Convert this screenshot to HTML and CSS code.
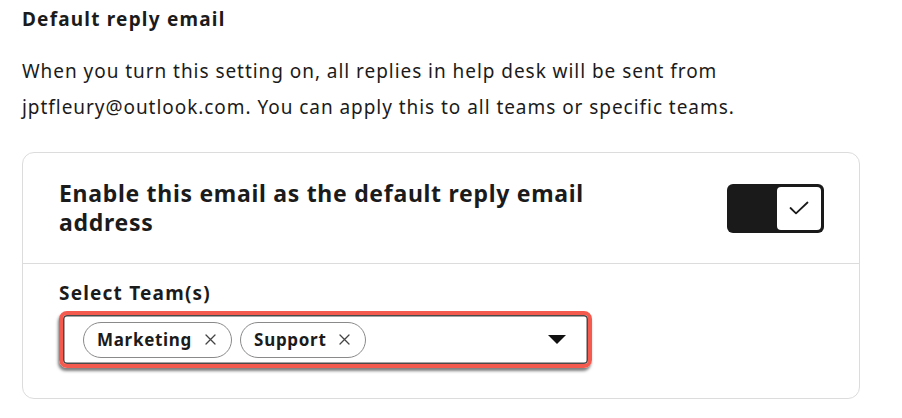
FILE: index.html
```html
<!DOCTYPE html>
<html lang="en">
<head>
<meta charset="utf-8">
<title>Default reply email</title>
<link rel="stylesheet" href="styles.css">
</head>
<body>
<main class="page">
  <h2 class="title">Default reply email</h2>
  <p class="desc">When you turn this setting on, all replies in help desk will be sent from jptfleury@outlook.com. You can apply this to all teams or specific teams.</p>
  <section class="card">
    <div class="card-head">
      <h3 class="card-title">Enable this email as the default reply email address</h3>
      <div class="toggle" role="switch" aria-checked="true">
        <span class="toggle-thumb">
          <svg width="20" height="14" viewBox="0 0 20 14" aria-hidden="true"><path d="M1.5 7 L7 12.3 L18.5 1.5" fill="none" stroke="#1a1a1a" stroke-width="1.8" stroke-linecap="round" stroke-linejoin="round"/></svg>
        </span>
      </div>
    </div>
    <div class="card-body">
      <div class="label">Select Team(s)</div>
      <div class="select">
        <span class="tag">Marketing <svg class="x" width="11" height="11" viewBox="0 0 11 11" aria-hidden="true"><path d="M1 1 L10 10 M10 1 L1 10" stroke="#444" stroke-width="1.3" stroke-linecap="round"/></svg></span>
        <span class="tag">Support <svg class="x" width="11" height="11" viewBox="0 0 11 11" aria-hidden="true"><path d="M1 1 L10 10 M10 1 L1 10" stroke="#444" stroke-width="1.3" stroke-linecap="round"/></svg></span>
        <span class="caret"></span>
      </div>
    </div>
  </section>
</main>
</body>
</html>
```
FILE: styles.css
```css
* { box-sizing: border-box; }
html, body { margin: 0; padding: 0; background: #fff; }
body {
  font-family: "Noto Sans", "DejaVu Sans", sans-serif;
  color: #1b1b1b;
}
.page {
  padding: 5px 43px 0 22px;
}
.title {
  margin: 0;
  font-size: 19px;
  font-weight: 700;
  line-height: 28px;
  letter-spacing: 1.2px;
}
.desc {
  margin: 20px 0 0;
  font-size: 19px;
  line-height: 36px;
  letter-spacing: 0.95px;
  width: 760px;
}
.card {
  margin-top: 27px;
  border: 1px solid #dcdcdc;
  border-radius: 12px;
  width: 838px;
}
.card-head {
  display: flex;
  align-items: center;
  justify-content: space-between;
  padding: 26px 35px 26px 36px;
  border-bottom: 1px solid #dcdcdc;
}
.card-title {
  margin: 0;
  font-size: 23px;
  font-weight: 700;
  line-height: 29px;
  letter-spacing: 0.7px;
  width: 560px;
}
.toggle {
  width: 97px;
  height: 49px;
  background: #1a1a1a;
  border-radius: 6px;
  display: flex;
  justify-content: flex-end;
  padding: 1px;
}
.toggle-thumb {
  width: 48px;
  height: 47px;
  background: #fff;
  border: 2px solid #1a1a1a;
  border-radius: 6px;
  display: flex;
  align-items: center;
  justify-content: center;
}
.card-body {
  padding: 15px 36px 30px;
}
.label {
  font-size: 19px;
  font-weight: 700;
  line-height: 28px;
  letter-spacing: 1.2px;
}
.select {
  margin-top: 4px;
  width: 533px;
  height: 57px;
  border: 4px solid #f55a4f;
  border-radius: 8px;
  box-shadow: inset 0 0 0 1.5px #4a4a4a, -1px 3px 3px rgba(0,0,0,0.5);
  display: flex;
  align-items: center;
  gap: 8px;
  padding: 0 20px 0 20px;
}
.tag {
  display: inline-flex;
  align-items: center;
  height: 36px;
  border: 1px solid #8a8a8a;
  border-radius: 18px;
  padding: 0 15px 0 13px;
  font-size: 17px;
  font-weight: 700;
  letter-spacing: 0.7px;
  gap: 13px;
}
.x {
  display: block;
  flex: none;
}
.caret {
  margin-left: auto;
  width: 0;
  height: 0;
  border-left: 9px solid transparent;
  border-right: 9px solid transparent;
  border-top: 9px solid #111;
  margin-right: 2px;
}
```
